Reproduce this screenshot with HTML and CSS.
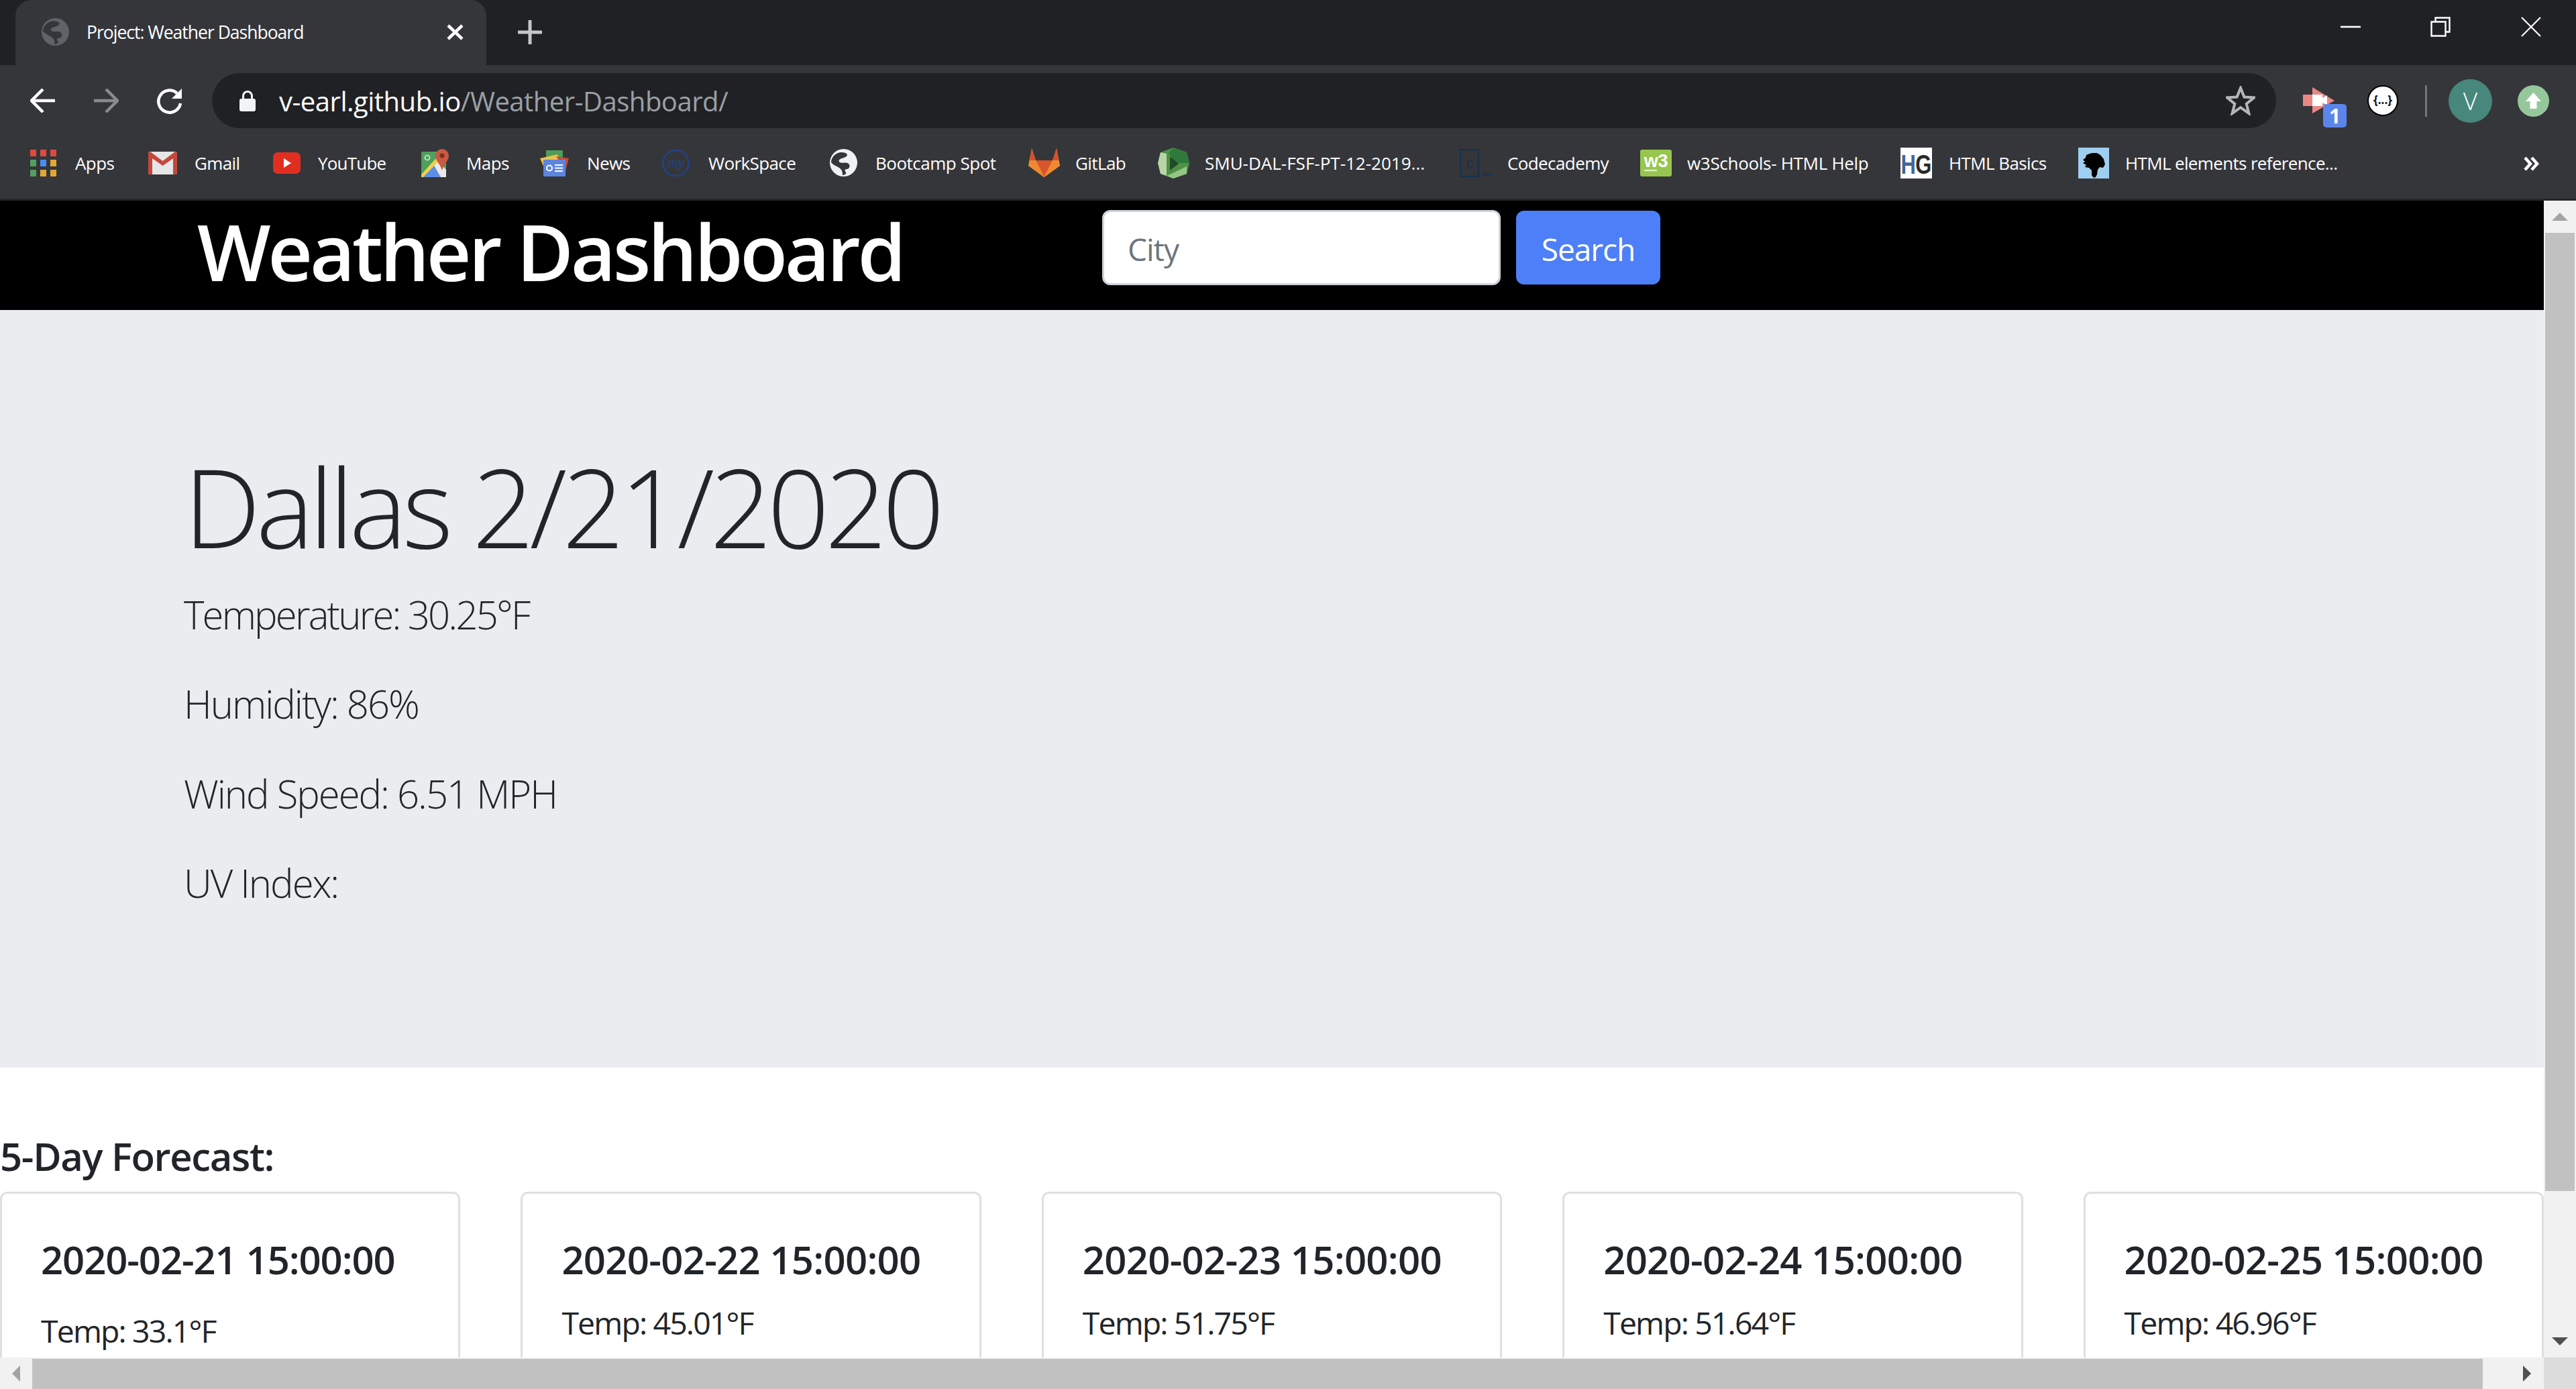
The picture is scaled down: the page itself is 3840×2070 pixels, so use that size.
FILE: index.html
```html
<!DOCTYPE html>
<html lang="en">
<head>
<meta charset="utf-8">
<title>Project: Weather Dashboard</title>
<link rel="stylesheet" href="styles.css">
</head>
<body>
<div class="browser">
  <div class="tabstrip">
    <div class="tab">
      <svg class="favicon" viewBox="0 0 40 40"><circle cx="20" cy="20" r="20" fill="#5f6368"/><path d="M10 6c6-3 12-2 15 0 3 3-2 6-7 7-4 1-6 4-3 6 4 2 9-1 13 2 3 3 1 8-3 8-3 0-3 3-1 5 1 2-2 4-5 4 0-5-1-8-5-11-5-3-9-4-12-8 0-5 3-10 8-13z" fill="#35363a"/></svg>
      <span class="tab-title">Project: Weather Dashboard</span>
      <svg class="tab-close" viewBox="0 0 25 24"><path d="M2 2l21 20M23 2L2 22" stroke="#fff" stroke-width="4.5" fill="none"/></svg>
    </div>
    <svg class="newtab" viewBox="0 0 36 36"><path d="M18 1v34M1 18h34" stroke="#c4c7c5" stroke-width="5" stroke-linecap="round" fill="none"/></svg>
    <div class="winctl">
      <svg class="win-min" viewBox="0 0 30 4"><path d="M0 2h30" stroke="#fff" stroke-width="2.6"/></svg>
      <svg class="win-res" viewBox="0 0 30 30"><path d="M1.5 7.5h21v21h-21zM7.5 7V1.5h21v21H23" stroke="#fff" stroke-width="2.4" fill="none"/></svg>
      <svg class="win-close" viewBox="0 0 30 30"><path d="M1 1l28 28M29 1L1 29" stroke="#fff" stroke-width="2.2" fill="none"/></svg>
    </div>
  </div>

  <div class="toolbar">
    <svg class="nav nav-back" viewBox="0 0 38 36"><path d="M37 18H4M19 1L2 18l17 17" stroke="#fff" stroke-width="4.5" fill="none"/></svg>
    <svg class="nav nav-fwd" viewBox="0 0 38 36"><path d="M1 18h33M19 1l17 17-17 17" stroke="#8a8b8e" stroke-width="4.5" fill="none"/></svg>
    <svg class="nav nav-reload" viewBox="0 0 40 40"><path d="M32 9a16.5 16.5 0 1 0 5 15" stroke="#fff" stroke-width="4.5" fill="none"/><path d="M39 2v15H24z" fill="#fff"/></svg>
    <div class="omnibox">
      <svg class="lock" viewBox="0 0 24 31"><path d="M5.5 13V8a6.5 6.5 0 0 1 13 0v5" stroke="#f1f3f4" stroke-width="3" fill="none"/><rect y="12" width="24" height="19" rx="3" fill="#f1f3f4"/></svg>
      <span class="url"><span class="url-host">v-earl.github.io</span><span class="url-path">/Weather-Dashboard/</span></span>
      <svg class="star" viewBox="0 0 44 44"><path d="M22 3l5.4 13.6 14.6.9-11.3 9.3 3.7 14.2L22 32.2 9.6 40.999l3.7-14.2L2 17.500l14.600-.9z" stroke="#b4b5b7" stroke-width="4" fill="none"/></svg>
    </div>
    <div class="ext ext-cam">
      <svg viewBox="0 0 48 40"><path d="M14 0l33 20-33 19V28H0V11h14z" fill="#e98883"/><path d="M14 11h15v5l7-4v15l-7-4v5H14z" fill="#fff"/></svg>
      <span class="ext-badge">1</span>
    </div>
    <div class="ext-json">{...}</div>
    <div class="tool-sep"></div>
    <div class="avatar">V</div>
    <svg class="ext-up" viewBox="0 0 47 47"><circle cx="23.500" cy="23.500" r="23.500" fill="#96c79b"/><path d="M23.500 11L35 24h-6.500v11h-10V24H12z" fill="#fff"/></svg>
  </div>

  <div class="bookmarks">
    <a class="bm bm-apps"><svg class="bi" viewBox="0 0 39 40"><g fill="#df4a3f"><rect width="9" height="10"/><rect x="15" width="9" height="10"/><rect x="30" width="9" height="10"/></g><rect y="15" width="9" height="10" fill="#549e5e"/><rect x="15" y="15" width="9" height="10" fill="#4a8cf0"/><rect x="30" y="15" width="9" height="10" fill="#e3a733"/><rect y="30" width="9" height="10" fill="#549e5e"/><rect x="15" y="30" width="9" height="10" fill="#e3a733"/><rect x="30" y="30" width="9" height="10" fill="#e3a733"/></svg>Apps</a>
    <a class="bm bm-gmail"><svg class="bi" viewBox="0 0 43 34"><rect width="43" height="34" rx="3" fill="#e6e6e6"/><path d="M0 3a3 3 0 0 1 3-3l18.500 14L40 0a3 3 0 0 1 3 3v28a3 3 0 0 1-3 3h-3V10L21.500 21 6 10v24H3a3 3 0 0 1-3-3z" fill="#c4473a"/></svg>Gmail</a>
    <a class="bm bm-yt"><svg class="bi" viewBox="0 0 41 32"><rect width="41" height="32" rx="7" fill="#e02f20"/><path d="M16 9l11 7-11 7z" fill="#fff"/></svg>YouTube</a>
    <a class="bm bm-maps"><svg class="bi" viewBox="0 0 41 42"><rect y="4" width="37" height="38" rx="2" fill="#4fa05c"/><path d="M0 42L24 17l13 14v11z" fill="#5c8ee8"/><path d="M24 17l13 14v11l-8-.1L18 23z" fill="#eaeaea"/><path d="M0 38L22 14l4 4L3 42H0z" fill="#f1d04b"/><path d="M31 0a10 10 0 0 1 10 10c0 7-7 12-10 22-3-10-10-15-10-22A10 10 0 0 1 31 0z" fill="#c95a42"/><circle cx="31" cy="10" r="3.500" fill="#7b2f22"/><circle cx="9" cy="13" r="3.500" stroke="#dfe8df" stroke-width="1.600" fill="none"/></svg>Maps</a>
    <a class="bm bm-news"><svg class="bi" viewBox="0 0 43 40"><rect x="9" y="1" width="25" height="14" fill="#4e9c58"/><path d="M0 13L26 7l6 12-25 10z" fill="#e8c24a"/><path d="M24 10l19 3-5 18z" fill="#c9493c"/><rect x="5" y="15" width="33" height="25" rx="1" fill="#5c85e0"/><circle cx="14" cy="27.500" r="4" stroke="#fff" stroke-width="2" fill="none"/><path d="M22 23h12M22 27.500h12M22 32h12" stroke="#fff" stroke-width="2.200"/></svg>News</a>
    <a class="bm bm-my"><svg class="bi" viewBox="0 0 41 42"><circle cx="20.500" cy="21" r="19" stroke="#1f4488" stroke-width="2.400" fill="none"/><text class="my-text" x="20.500" y="27" text-anchor="middle">my</text></svg>WorkSpace</a>
    <a class="bm bm-boot"><svg class="bi" viewBox="0 0 41 41"><circle cx="20.500" cy="20.500" r="20.500" fill="#eff1f5"/><path d="M10 7c6-3 12-2 15 0 3 3-2 6-7 7-4 1-6 4-3 6 4 2 9-1 13 2 3 3 1 8-3 8-3 0-3 3-1 5 1 2-2 4-5 4 0-5-1-8-5-11-5-3-9-4-12-8 0-5 3-10 8-13z" fill="#35363a"/></svg>Bootcamp Spot</a>
    <a class="bm bm-gl"><svg class="bi" viewBox="0 0 47 43"><path d="M5 0l6 18H36L42 0l5 26-23.500 17L0 26z" fill="#e8a23a"/><path d="M11 18h25l-12.500 25z" fill="#d9552a"/><path d="M5 0l6 18H2zM42 0l-6 18h9z" fill="#d4502a"/><path d="M11 18l12.500 25L0 26l2-8zM36 18L23.500 43 47 26l-2-8z" fill="#ef8a32"/></svg>GitLab</a>
    <a class="bm bm-smu"><svg class="bi" viewBox="0 0 47 46"><path d="M23 0l20 7 4 16-4 16-20 7-19-7-4-16 4-16z" fill="#4f9148"/><path d="M23 0l20 7 4 16H28L16 9z" fill="#2f7a3b"/><path d="M4 7L0 23l4 16 9 3V9z" fill="#b7d6a6"/><path d="M18 13l13 11-13 10z" fill="#234a28"/><path d="M13 42l10 4 20-7V28L22 38z" fill="#93c583"/></svg>SMU-DAL-FSF-PT-12-2019...</a>
    <a class="bm bm-cc"><svg class="bi" viewBox="0 0 47 42"><rect x="1" y="1" width="27" height="40" stroke="#17324e" stroke-width="2.500" fill="none"/><text class="cc-text" x="15" y="29" text-anchor="middle">c</text><path d="M35 38h12" stroke="#17324e" stroke-width="3"/></svg>Codecademy</a>
    <a class="bm bm-w3"><svg class="bi" viewBox="0 0 47 40"><rect width="47" height="40" rx="3" fill="#97c64f"/><text class="w3-text" x="23.500" y="26" text-anchor="middle">w3</text><path d="M6 31h19" stroke="#dcefc2" stroke-width="2.400"/></svg>w3Schools- HTML Help</a>
    <a class="bm bm-hg"><svg class="bi" viewBox="0 0 47 46"><rect width="47" height="46" fill="#fff"/><text class="hg-text" x="0.500" y="30" transform="scale(1 1.3)"><tspan fill="#43659c">H</tspan><tspan fill="#2a2a2a">G</tspan></text></svg>HTML Basics</a>
    <a class="bm bm-mdn"><svg class="bi" viewBox="0 0 46 46"><rect width="46" height="46" fill="#9fcff0"/><path d="M7 18l4-3 1-4 5-2 4-1 7 0 5 3 5 6 2 8-3 5-5-1-3 4-1 7-2 4-3 1-3-4 0-7-4-4-6-1 2-3-5-3 3-2z" fill="#000"/></svg>HTML elements reference...</a>
    <svg class="bm-more" viewBox="0 0 24 24"><path d="M3 3l8 9-8 9M13 3l8 9-8 9" stroke="#fff" stroke-width="4.500" fill="none"/></svg>
  </div>
  <div class="chrome-edge"></div>

  <div class="viewport">
    <div class="page">
      <header class="site-head">
        <h1 class="site-title">Weather Dashboard</h1>
        <form class="search">
          <input class="city" type="text" placeholder="City">
          <button class="go" type="button">Search</button>
        </form>
      </header>
      <main class="page-main">
        <section class="hero">
          <h2 class="city-date">Dallas 2/21/2020</h2>
          <p class="lead lead-temp">Temperature: 30.25°F</p>
          <p class="lead">Humidity: 86%</p>
          <p class="lead">Wind Speed: 6.51 MPH</p>
          <p class="lead">UV Index:</p>
        </section>
        <section class="forecast">
          <h3 class="fc-head">5-Day Forecast:</h3>
          <div class="fc-cards">
            <article class="card card-first"><h4 class="card-title">2020-02-21 15:00:00</h4><p class="card-text">Temp: 33.1°F</p></article>
            <article class="card"><h4 class="card-title">2020-02-22 15:00:00</h4><p class="card-text">Temp: 45.01°F</p></article>
            <article class="card"><h4 class="card-title">2020-02-23 15:00:00</h4><p class="card-text">Temp: 51.75°F</p></article>
            <article class="card"><h4 class="card-title">2020-02-24 15:00:00</h4><p class="card-text">Temp: 51.64°F</p></article>
            <article class="card"><h4 class="card-title">2020-02-25 15:00:00</h4><p class="card-text">Temp: 46.96°F</p></article>
          </div>
        </section>
      </main>
    </div>
    <div class="vbar">
      <div class="sb-btn"><span class="tri tri-up"></span></div>
      <div class="vthumb"></div>
      <div class="sb-fill"></div>
      <div class="sb-btn"><span class="tri tri-down"></span></div>
    </div>
    <div class="hbar">
      <div class="sb-btn"><span class="tri tri-left"></span></div>
      <div class="hthumb"></div>
      <div class="sb-btn sb-btn-end"><span class="tri tri-right"></span></div>
    </div>
    <div class="corner"></div>
  </div>
</div>
</body>
</html>
```
FILE: styles.css
```css
* { box-sizing: border-box; }
html, body { margin: 0; height: 100%; overflow: hidden; }
body { font-family: "Open Sans", "Noto Sans", sans-serif; background: #fff; color: #212529; }
.browser { width: 3840px; height: 2070px; display: flex; flex-direction: column; }

/* tab strip */
.tabstrip { height: 97px; background: #202124; display: flex; align-items: flex-start; flex: none; }
.tab { width: 702px; height: 97px; margin-left: 23px; background: #35363a; border-radius: 24px 24px 0 0; display: flex; align-items: center; position: relative; padding-bottom: 2px; }
.favicon { width: 41px; height: 41px; margin-left: 39px; flex: none; }
.tab-title { margin-left: 26px; font-size: 26.500px; color: #fff; letter-spacing: -1px; white-space: nowrap; }
.tab-close { position: absolute; left: 643px; top: 36px; width: 25px; height: 24px; }
.newtab { width: 36px; height: 36px; margin: 30px 0 0 47px; }
.winctl { margin-left: auto; display: flex; align-items: center; height: 80px; padding-right: 52px; }
.win-min { width: 30px; height: 4px; }
.win-res { width: 30px; height: 30px; margin-left: 104px; }
.win-close { width: 30px; height: 30px; margin-left: 105px; }

/* toolbar */
.toolbar { height: 94px; padding: 12px 40px 0 45px; background: #35363a; display: flex; align-items: center; flex: none; }
.nav { flex: none; }
.nav-back { width: 38px; height: 36px; }
.nav-fwd { width: 38px; height: 36px; margin-left: 56px; }
.nav-reload { width: 40px; height: 40px; margin-left: 55px; }
.omnibox { width: 3077px; height: 82px; margin-left: 44px; background: #202124; border-radius: 41px; display: flex; align-items: center; padding: 0 22px 0 41px; flex: none; }
.lock { width: 24px; height: 31px; flex: none; }
.url { margin-left: 35px; font-size: 40px; letter-spacing: -.5px; white-space: nowrap; }
.url-host { color: #fff; }
.url-path { color: #9aa0a6; }
.star { width: 44px; height: 44px; margin-left: auto; margin-right: 9px; }
.ext { position: relative; }
.ext-cam { width: 48px; height: 40px; margin-left: 40px; flex: none; }
.ext-cam svg { width: 48px; height: 40px; display: block; }
.ext-badge { position: absolute; left: 30px; top: 25px; width: 35px; height: 35px; background: #5b85ea; border-radius: 5px; color: #fff; font-size: 30px; font-weight: 700; text-align: center; line-height: 35px; }
.ext-json { width: 46px; height: 46px; margin-left: 48px; border-radius: 50%; background: #fff; border: 2px solid #000; color: #111; font-size: 17px; font-weight: 700; text-align: center; line-height: 40px; flex: none; }
.tool-sep { width: 3px; height: 47px; margin-left: 40px; background: #75767a; flex: none; }
.avatar { width: 65px; height: 65px; margin-left: 32px; border-radius: 50%; background: #48877b; color: #fff; font-size: 37px; font-weight: 300; text-align: center; line-height: 64px; flex: none; }
.ext-up { width: 47px; height: 47px; margin-left: 38px; flex: none; }

/* bookmarks */
.bookmarks { height: 105px; background: #35363a; display: flex; align-items: center; padding: 0 0 2px 45px; flex: none; position: relative; }
.bm { display: flex; align-items: center; font-size: 26px; letter-spacing: -.6px; color: #fff; white-space: nowrap; flex: none; }
.bi { flex: none; display: block; height: 42px; margin-right: 26px; }
.bm-apps { width: 176px; } .bm-apps .bi { width: 39px; height: 40px; margin-right: 28px; }
.bm-gmail { width: 186px; } .bm-gmail .bi { width: 43px; height: 34px; }
.bm-yt { width: 221px; letter-spacing: -.8px; } .bm-yt .bi { width: 41px; height: 32px; }
.bm-maps { width: 177px; } .bm-maps .bi { width: 41px; height: 42px; }
.bm-news { width: 182px; } .bm-news .bi { width: 43px; height: 40px; margin-right: 27px; }
.bm-my { width: 250px; } .bm-my .bi { width: 41px; margin-right: 28px; }
.bm-boot { width: 296px; letter-spacing: -.5px; } .bm-boot .bi { width: 41px; height: 41px; margin-right: 27px; }
.bm-gl { width: 193px; } .bm-gl .bi { width: 47px; height: 43px; margin-right: 23px; }
.bm-smu { width: 450px; letter-spacing: 0; } .bm-smu .bi { width: 47px; height: 46px; margin-right: 23px; }
.bm-cc { width: 269px; } .bm-cc .bi { width: 47px; margin-right: 24px; }
.bm-w3 { width: 388px; letter-spacing: -.3px; } .bm-w3 .bi { width: 47px; height: 40px; margin-right: 23px; }
.bm-hg { width: 265px; } .bm-hg .bi { width: 47px; height: 46px; margin-right: 25px; overflow: visible; }
.bm-mdn { width: 400px; letter-spacing: -.65px; } .bm-mdn .bi { width: 46px; height: 46px; margin-right: 24px; }
.bm-more { position: absolute; left: 3761px; top: 41px; width: 24px; height: 24px; }
.my-text { font: italic 22px "Liberation Serif", serif; fill: #1f4488; }
.cc-text { font: 22px "Liberation Sans", sans-serif; fill: #17324e; }
.w3-text { font: 700 27px "Liberation Sans", sans-serif; fill: #fff; }
.hg-text { font: 700 31px "Liberation Sans", sans-serif; }
.chrome-edge { height: 3px; background: #26272a; flex: none; }

/* page viewport */
.viewport { flex: 1; min-height: 0; display: grid; grid-template-columns: 3792px 48px; grid-template-rows: 1724px 47px; }
.page { background: #fff; display: flex; flex-direction: column; min-height: 0; }
.page-main { flex: 1; min-height: 0; overflow: hidden; }
.site-head { height: 163px; background: #000; display: flex; align-items: flex-start; padding-left: 294px; flex: none; }
.site-title { width: 1349px; margin: 0; font-size: 116px; line-height: 151px; font-weight: 600; color: #fff; letter-spacing: -4.300px; white-space: nowrap; flex: none; }
.search { display: flex; align-items: flex-start; margin-top: 14px; }
.city { width: 594px; height: 112px; padding: 3px 35px 0; border: 3px solid #ced4da; border-radius: 12px; background: #fff; font: 46px "Open Sans", sans-serif; letter-spacing: -1px; color: #495057; }
.city::placeholder { color: #6c757d; opacity: 1; }
.go { width: 215px; height: 110px; margin: 1px 0 0 23px; border: 0; border-radius: 12px; background: #4d7ff8; color: #fff; font: 46px "Open Sans", sans-serif; letter-spacing: -1px; padding: 3px 0 0; }

.hero { height: 1129px; background: #ebecf0; padding: 193px 0 0 274px; }
.city-date { margin: 0 0 21px; padding-top: 2px; font-size: 162px; line-height: 194px; font-weight: 300; letter-spacing: -6.700px; white-space: nowrap; }
.lead { margin: 0 0 46.400px; font-size: 58px; line-height: 87px; font-weight: 300; letter-spacing: -2px; white-space: nowrap; }
.lead-temp { letter-spacing: -2.800px; }

.forecast { padding-top: 97px; }
.fc-head { margin: 0 0 18px; font-size: 58px; line-height: 70px; font-weight: 600; letter-spacing: -1.350px; }
.fc-cards { display: grid; grid-template-columns: repeat(5, 1fr); gap: 90px; }
.card { height: 400px; border: 3px solid #dfdfdf; border-radius: 11px; padding: 63px 58px 0; background: #fff; }
.card-title { margin: 0 0 24px; font-size: 58px; line-height: 70px; font-weight: 600; letter-spacing: -.7px; white-space: nowrap; }
.card-first .card-title { margin-bottom: 36px; letter-spacing: -1.100px; }
.card-text { margin: 0; font-size: 46.400px; line-height: 70px; letter-spacing: -1.850px; white-space: nowrap; }

/* scrollbars */
.vbar { background: #f1f1f1; display: flex; flex-direction: column; align-items: center; }
.hbar { background: #f1f1f1; display: flex; grid-column: 1; }
.corner { background: #dcdcdc; }
.sb-btn { flex: none; width: 48px; height: 48px; display: flex; align-items: center; justify-content: center; }
.sb-btn-end { width: 91px; justify-content: flex-start; padding-left: 60px; }
.vthumb { width: 44px; height: 1428px; background: #c1c1c1; flex: none; }
.sb-fill { flex: 1; }
.hthumb { flex: 1; margin-top: 2px; background: #c1c1c1; }
.tri { display: block; width: 0; height: 0; border-style: solid; border-color: transparent; }
.tri-up { border-width: 0 12px 12px; border-bottom-color: #a3a3a3; }
.tri-down { border-width: 12px 12px 0; border-top-color: #505050; }
.tri-left { border-width: 12px 12px 12px 0; border-right-color: #a3a3a3; }
.tri-right { border-width: 12px 0 12px 12px; border-left-color: #505050; }
```
